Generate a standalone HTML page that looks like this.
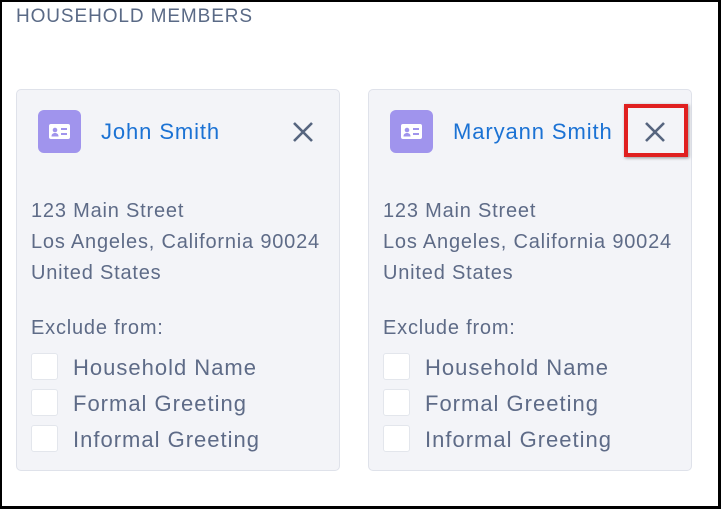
<!DOCTYPE html>
<html><head><style>
*{margin:0;padding:0;box-sizing:border-box}
body{width:721px;height:509px;background:#fff;position:relative;overflow:hidden;font-family:"Liberation Sans",sans-serif;color:#54698d}
.frame{position:absolute;left:0;top:0;width:721px;height:509px;border:2px solid #000;border-right-width:3px;border-bottom-width:3px}
.title{position:absolute;left:16px;top:6px;font-size:19px;color:#5a6a86;letter-spacing:0.9px}
.card{position:absolute;top:89px;width:324px;height:382px;background:#f3f4f8;border:1px solid #dfe2ea;border-radius:5px}
.icon{position:absolute;left:21px;top:20px;width:43px;height:43px;border-radius:6px;background:#a094ed}
.name{position:absolute;left:84px;top:29px;font-size:22px;color:#1b72d4;letter-spacing:0.9px}
.x{position:absolute;top:30px;width:24px;height:24px}
.t{position:absolute;left:14px;font-size:20px;color:#5e6b87;letter-spacing:0.8px}
.cb{position:absolute;left:14px;width:27px;height:27px;background:#fff;border:1px solid #e3e6ec;border-radius:3px}
.lbl{position:absolute;left:56px;font-size:22px;color:#5e6b87;letter-spacing:1px}
.red{position:absolute;left:624px;top:104px;width:64px;height:53px;border:4px solid #e02020;box-shadow:1px 1px 3px rgba(0,0,0,.4)}
</style></head><body>
<div class="title">HOUSEHOLD MEMBERS</div>

<div class="card" style="left:16px">
<div class="icon"><svg width="43" height="43" viewBox="0 0 43 43"><rect x="11" y="14" width="21" height="15" rx="2" fill="#fff"/><circle cx="17" cy="20" r="2.3" fill="#a094ed"/><path d="M13.5 26.5c0-2.5 1.5-3.5 3.5-3.5s3.5 1 3.5 3.5z" fill="#a094ed"/><rect x="23" y="18" width="6" height="2" fill="#a094ed"/><rect x="23" y="23" width="6" height="2" fill="#a094ed"/></svg></div>
<div class="name">John Smith</div>
<svg class="x" style="left:274px" viewBox="0 0 24 24"><path d="M3 3L21 21M21 3L3 21" stroke="#56657f" stroke-width="2.6"/></svg>
<div class="t" style="top:110px">123 Main Street</div>
<div class="t" style="top:141px">Los Angeles, California 90024</div>
<div class="t" style="top:172px">United States</div>
<div class="t" style="top:227px">Exclude from:</div>
<div class="cb" style="top:263px"></div><div class="lbl" style="top:265px">Household Name</div>
<div class="cb" style="top:299px"></div><div class="lbl" style="top:301px">Formal Greeting</div>
<div class="cb" style="top:335px"></div><div class="lbl" style="top:337px">Informal Greeting</div>
</div>

<div class="card" style="left:368px">
<div class="icon"><svg width="43" height="43" viewBox="0 0 43 43"><rect x="11" y="14" width="21" height="15" rx="2" fill="#fff"/><circle cx="17" cy="20" r="2.3" fill="#a094ed"/><path d="M13.5 26.5c0-2.5 1.5-3.5 3.5-3.5s3.5 1 3.5 3.5z" fill="#a094ed"/><rect x="23" y="18" width="6" height="2" fill="#a094ed"/><rect x="23" y="23" width="6" height="2" fill="#a094ed"/></svg></div>
<div class="name">Maryann Smith</div>
<svg class="x" style="left:274px" viewBox="0 0 24 24"><path d="M3 3L21 21M21 3L3 21" stroke="#56657f" stroke-width="2.6"/></svg>
<div class="t" style="top:110px">123 Main Street</div>
<div class="t" style="top:141px">Los Angeles, California 90024</div>
<div class="t" style="top:172px">United States</div>
<div class="t" style="top:227px">Exclude from:</div>
<div class="cb" style="top:263px"></div><div class="lbl" style="top:265px">Household Name</div>
<div class="cb" style="top:299px"></div><div class="lbl" style="top:301px">Formal Greeting</div>
<div class="cb" style="top:335px"></div><div class="lbl" style="top:337px">Informal Greeting</div>
</div>
<div class="red"></div>
<div class="frame"></div>
</body></html>
